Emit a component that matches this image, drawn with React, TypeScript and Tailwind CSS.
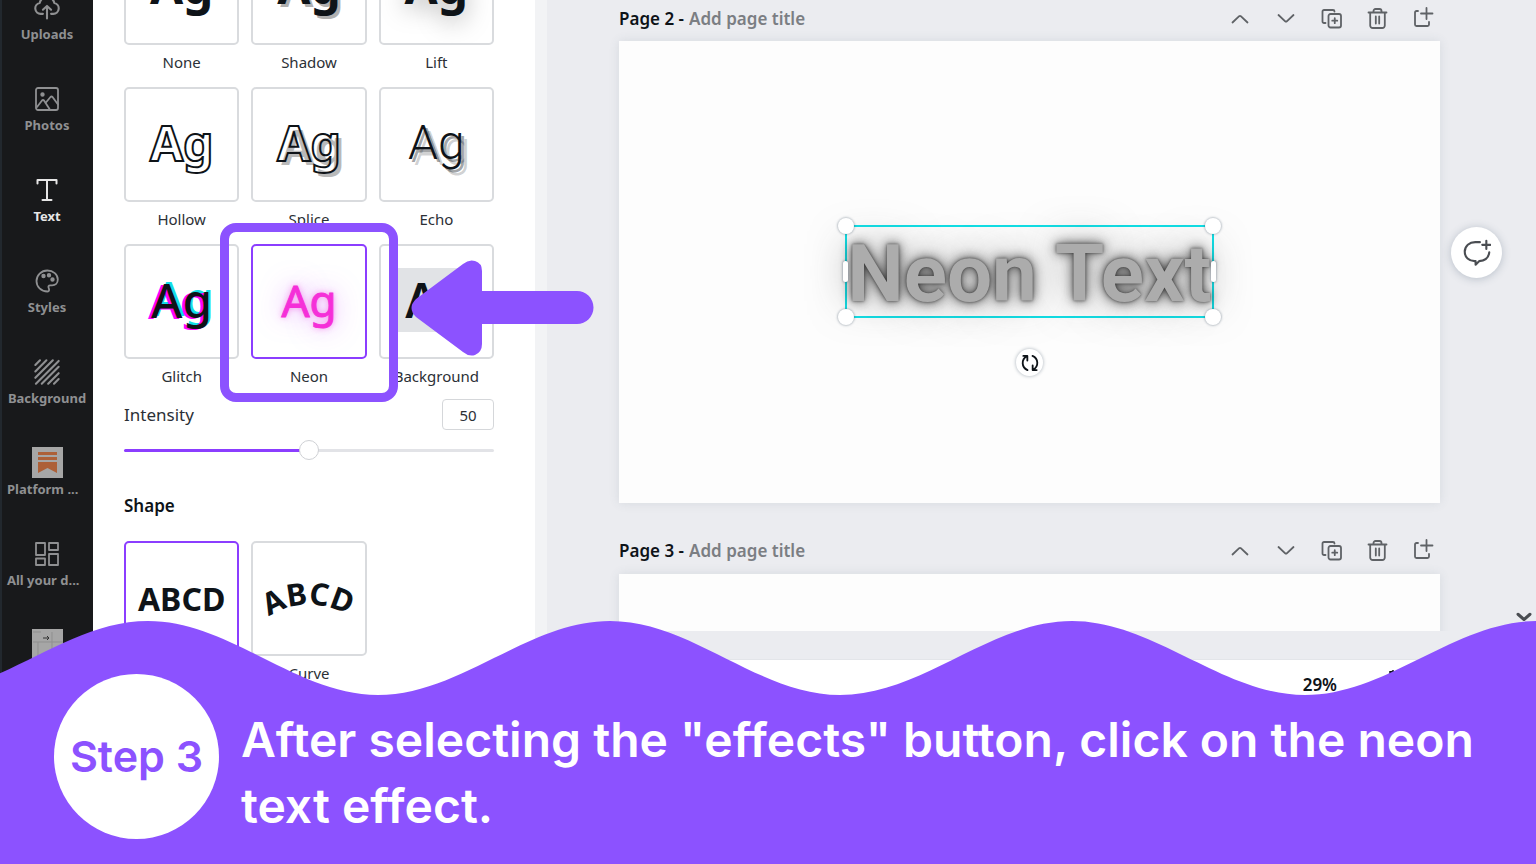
import { useState } from "react";
import type { ReactNode } from "react";

type IconProps = { className?: string; children: ReactNode };

function Icon({ className = "size-6", children }: IconProps) {
  return (
    <svg
      viewBox="0 0 24 24"
      fill="none"
      stroke="currentColor"
      strokeWidth={1.8}
      strokeLinecap="round"
      strokeLinejoin="round"
      className={className}
      aria-hidden="true"
    >
      {children}
    </svg>
  );
}

const NAV: { label: string; icon: ReactNode; active?: boolean; cut?: boolean }[] = [
  {
    label: "Uploads",
    icon: (
      <Icon className="size-7">
        <path d="M8.5 17H6.6a4.7 4.7 0 0 1-.9-9.3 6.5 6.5 0 0 1 12.6 0 4.7 4.7 0 0 1-.9 9.3h-1.9" />
        <path d="M12 21v-10.500M8.500 13.500 12 10.200l3.500 3.300" />
      </Icon>
    ),
  },
  {
    label: "Photos",
    icon: (
      <Icon>
        <rect x="1" y="1" width="22" height="22" rx="2" />
        <circle cx="7.500" cy="7.500" r="1.300" fill="currentColor" />
        <path d="m2 20 5-6.500q1-1 2 0L14.500 22M10.500 16l5-6q1-1 2 0L23 17.500" />
      </Icon>
    ),
  },
  {
    label: "Text",
    active: true,
    icon: (
      <Icon>
        <path d="M2.500 5.500V2h19v3.500M12 2v20M7.500 22h9" strokeWidth={2} />
      </Icon>
    ),
  },
  {
    label: "Styles",
    icon: (
      <Icon>
        <path d="M12.500 22.500C6 22.500 1.500 17.700 1.500 12S6.300 1.500 12.300 1.500 22.800 5.500 22.800 10.500c0 3.600-2.500 5.800-5.700 5.800h-1.900c-1.700 0-2.200 1.500-1.500 2.800.8 1.600.5 3.400-1.200 3.400Z" />
        <circle cx="8.500" cy="7" r="1.300" fill="currentColor" />
        <circle cx="14" cy="6.300" r="1.300" fill="currentColor" />
        <circle cx="17.500" cy="10.500" r="1.300" fill="currentColor" />
      </Icon>
    ),
  },
  {
    label: "Background",
    icon: (
      <Icon className="size-7">
        <path d="m2 6 4-4M2 11.500 11.500 2M2 17 17 2M2.500 22 22 2.500M7.500 22 22 7.500M13 22l9-9M18 22l4-4" />
      </Icon>
    ),
  },
  {
    label: "Platform ...",
    cut: true,
    icon: (
      <svg viewBox="0 0 31 31" className="size-[31px]" aria-hidden="true">
        <path d="M0 0h31v31H0z" fill="#a6a6a6" />
        <path d="M6 5h19v3H6zM6 10h19v3H6zM6 15h19v11l-9.500-5L6 26z" fill="#ad6038" />
      </svg>
    ),
  },
  {
    label: "All your d...",
    cut: true,
    icon: (
      <Icon>
        <path d="M1 1h9v12H1zM14 1h9v7h-9zM1 16.500h9V23H1zM14 12h9v11h-9z" />
      </Icon>
    ),
  },
  {
    label: "Flow",
    icon: (
      <svg viewBox="0 0 31 31" className="size-[31px]" aria-hidden="true">
        <path d="M0 0h31v31H0z" fill="#a6a6a6" />
        <path d="M1 13h30M1 3h8M20 3v28M6 13v18" stroke="#8f8f8f" />
        <path d="M11 9h6m-2-2 2 2-2 2" stroke="#333" fill="none" />
      </svg>
    ),
  },
];

const EFFECTS = [
  { name: "None", style: "text-[48px] font-bold" },
  { name: "Shadow", style: "text-[48px] font-bold [text-shadow:3px_3px_0_#b0b0b0]" },
  {
    name: "Lift",
    style: "text-[48px] font-bold [text-shadow:0_5px_26px_rgba(0,0,0,0.35)]",
  },
  {
    name: "Hollow",
    style: "text-[48px] font-bold text-white [-webkit-text-stroke:2px_#0e1318]",
  },
  {
    name: "Splice",
    style:
      "text-[48px] font-bold text-transparent [-webkit-text-stroke:2px_#0e1318] [text-shadow:4px_4px_0_#b9b9b9]",
  },
  {
    name: "Echo",
    style:
      "text-[48px] font-['Roboto',sans-serif] font-light [text-shadow:3px_3px_0_rgba(14,19,24,0.4),6px_6px_0_rgba(14,19,24,0.2)]",
  },
  {
    name: "Glitch",
    style: "text-[48px] font-medium [text-shadow:-3px_1px_0_#ff00ff,2px_-2px_0_#12dfe6]",
  },
  {
    name: "Neon",
    style:
      "text-[44px] font-normal text-[#f52fd8] [-webkit-text-stroke:1px_#f52fd8] [text-shadow:0_0_6px_rgba(245,60,220,0.6),0_0_26px_rgba(190,60,255,0.55)]",
  },
  { name: "Background", style: "text-[48px] font-semibold bg-[#e1e3e6] px-3 py-2" },
];

export default function App() {
  const [effect, setEffect] = useState("Neon");
  const [intensity, setIntensity] = useState(50);

  return (
    <div className="relative flex h-screen overflow-hidden bg-[#ebecf0] font-['Noto_Sans','Open_Sans',sans-serif] text-[#0e1318]">
      <Sidebar />

      <section className="relative z-10 w-[442px] shrink-0 bg-white pl-[31px] pr-[41px]">
        <div className="-mt-[70px] grid grid-cols-3 gap-x-3 gap-y-[13px]">
          {EFFECTS.map((e) => (
            <div key={e.name} className={e.name === "Neon" ? "relative z-10" : ""}>
              <Tile label={e.name} selected={effect === e.name} onClick={() => setEffect(e.name)}>
                <span className={`leading-[48px] ${e.style}`}>Ag</span>
              </Tile>
              {e.name === "Neon" && <Callout />}
            </div>
          ))}
        </div>

        <div className="mt-[11px] flex items-center justify-between">
          <label htmlFor="intensity" className="text-[17px] leading-6 text-[#2b3036]">
            Intensity
          </label>
          <input
            aria-label="Intensity value"
            value={intensity}
            onChange={(e) => setIntensity(Number(e.target.value) || 0)}
            className="h-[31px] w-[52px] rounded border border-[#d5d7da] text-center text-[15px] text-[#2b3036] outline-none"
          />
        </div>
        <input
          id="intensity"
          type="range"
          min={0}
          max={100}
          value={intensity}
          onChange={(e) => setIntensity(Number(e.target.value))}
          className="mt-[10px] block h-5 w-full appearance-none bg-transparent [&::-webkit-slider-runnable-track]:h-[3px] [&::-webkit-slider-runnable-track]:rounded-full [&::-webkit-slider-runnable-track]:bg-[linear-gradient(to_right,#8b3dff_50%,#e2e3e7_50%)] [&::-webkit-slider-thumb]:-mt-[9px] [&::-webkit-slider-thumb]:size-5 [&::-webkit-slider-thumb]:appearance-none [&::-webkit-slider-thumb]:rounded-full [&::-webkit-slider-thumb]:border [&::-webkit-slider-thumb]:border-[#cfd1d5] [&::-webkit-slider-thumb]:bg-white"
        />

        <h2 className="mt-[34px] text-[17px] font-semibold leading-6">Shape</h2>
        <div className="mt-[23px] grid grid-cols-3 gap-x-3">
          <Tile label="None" selected>
            <span className="pt-1 text-[32px] font-bold leading-10">ABCD</span>
          </Tile>
          <Tile label="Curve">
            <svg viewBox="0 0 112 112" className="size-28" aria-label="ABCD">
              <path id="arc" d="M16 76Q56 50 106 79" fill="none" />
              <text className="fill-[#0e1318] text-[31px] font-bold">
                <textPath href="#arc">ABCD</textPath>
              </text>
            </svg>
          </Tile>
        </div>
      </section>
      <div className="w-3 shrink-0 bg-[#f2f3f5]" />

      <main className="relative flex min-w-0 flex-1 flex-col">
        <div className="min-h-0 flex-1 overflow-hidden pl-[72px] pr-24">
          <PageHeader number={2} />
          <div className="flex aspect-video items-center justify-center bg-[#fdfdfd] shadow-[0_0_10px_rgba(64,87,109,0.12)]">
            <NeonText />
          </div>
          <div className="mt-[30px]">
            <PageHeader number={3} />
          </div>
          <div className="aspect-video bg-[#fdfdfd] shadow-[0_0_10px_rgba(64,87,109,0.12)]" />
        </div>
        <footer className="mt-7 flex h-[205px] items-start justify-end gap-12 border-t border-[#e3e5e9] bg-white pr-[127px] pt-[13px]">
          <span className="text-[17px] font-semibold leading-6">29%</span>
          <Icon className="-mt-1 size-6">
            <path d="M2 8 8 2M5 3h6" strokeWidth={2} />
          </Icon>
        </footer>
        <button
          aria-label="Add comment"
          className="absolute right-[34px] top-[227px] flex size-[51px] items-center justify-center rounded-full bg-white text-[#4a4d52] shadow-[0_1px_8px_rgba(64,87,109,0.3)]"
        >
          <Icon className="size-7">
            <path d="M14.500 2.700H10.500C5.500 2.700 1.500 6 1.500 11c0 4.600 3.600 8 8.500 8h.8v3l3-3c5-.3 8.200-3.300 8.700-7.500M20 1.500v7M16.500 5h7" />
          </Icon>
        </button>
        <Icon className="absolute right-[3px] top-[609px] size-[18px] text-[#4a4d52]">
          <path d="m4 7 8 7 8-7" strokeWidth={4} />
        </Icon>
      </main>

      <StepBanner />
    </div>
  );
}

function Sidebar() {
  return (
    <nav className="w-[93px] shrink-0 border-l-2 border-[#22282e] bg-[#18191b] pr-px">
      <ul className="-mt-7">
        {NAV.map((item) => (
          <li key={item.label}>
            <a
              href="#"
              className={`flex h-[91px] flex-col items-center justify-center text-[13px] font-bold leading-5 ${
                item.active ? "text-[#e6e6e6]" : "text-[#8f9092]"
              }`}
            >
              <span className="flex h-8 items-center">{item.icon}</span>
              <span className={`w-20 whitespace-nowrap ${item.cut ? "text-left" : "text-center"}`}>
                {item.label}
              </span>
            </a>
          </li>
        ))}
      </ul>
    </nav>
  );
}

function Tile({
  label,
  selected = false,
  onClick,
  children,
}: {
  label: string;
  selected?: boolean;
  onClick?: () => void;
  children: ReactNode;
}) {
  return (
    <button onClick={onClick} className="block w-full text-center">
      <span
        className={`flex h-[115px] items-center justify-center overflow-hidden rounded-[5px] border-2 pb-1 ${
          selected ? "border-[#8b3dff]" : "border-[#d9dbde]"
        }`}
      >
        {children}
      </span>
      <span className="mt-[5px] block text-[15px] leading-6 text-[#2b3036]">{label}</span>
    </button>
  );
}

// Ring and arrow that point out the chosen effect
function Callout() {
  return (
    <div className="pointer-events-none">
      <div className="absolute -inset-x-[31px] -bottom-[14px] -top-[21px] rounded-2xl border-[9px] border-[#8c52ff]" />
      <svg
        viewBox="0 0 183 96"
        className="absolute left-[160px] top-4 h-24 w-[183px] fill-[#8c52ff]"
        aria-hidden="true"
      >
        <path d="M5 39 52 4Q58-1 64 1q7 2 7 10v20h95a16.500 16.500 0 0 1 0 33H71v20q0 8-7 11-6 2-12-3L5 57q-9-9 0-18Z" />
      </svg>
    </div>
  );
}

function PageHeader({ number }: { number: number }) {
  return (
    <div className="flex h-[41px] items-center justify-between pb-1 pr-1">
      <label className="flex items-center gap-[5px] text-[17px] font-semibold leading-6">
        Page {number} -
        <input
          placeholder="Add page title"
          className="w-40 bg-transparent font-semibold outline-none placeholder:text-[#7b7e83]"
        />
      </label>
      <div className="flex gap-[22px] text-[#5f6266]">
        <button aria-label="Move up">
          <Icon>
            <path d="m4.500 15.500 6.700-6.300q.8-.7 1.600 0l6.700 6.300" />
          </Icon>
        </button>
        <button aria-label="Move down">
          <Icon>
            <path d="m4.500 8 6.700 6.300q.8.7 1.600 0L19.500 8" />
          </Icon>
        </button>
        <button aria-label="Duplicate page">
          <Icon>
            <path d="M5.500 16H4a1.500 1.500 0 0 1-1.500-1.500v-10A1.500 1.500 0 0 1 4 3H13q1.500 0 1.500 1.500" />
            <rect x="8.500" y="7" width="12.500" height="13.500" rx="2" />
            <path d="M14.750 11.200v5M12.250 13.700h5" />
          </Icon>
        </button>
        <button aria-label="Delete page">
          <Icon>
            <path d="M2.500 5.500h18M7.500 5.500V4a2 2 0 0 1 2-2h4a2 2 0 0 1 2 2v1.500M4.200 5.500V18.500a2.500 2.500 0 0 0 2.500 2.500h9.600a2.500 2.500 0 0 0 2.500-2.500V5.500M9.800 9.500v7M13.200 9.500v7" />
          </Icon>
        </button>
        <button aria-label="Add page">
          <Icon>
            <path d="M6 4H4.500A1.500 1.500 0 0 0 3 5.500v12A1.500 1.500 0 0 0 4.500 19h11a1.500 1.500 0 0 0 1.500-1.500V15M14.500 1v11M9 6.500h11.500" />
          </Icon>
        </button>
      </div>
    </div>
  );
}

function NeonText() {
  const corner = "absolute size-4 rounded-full bg-white shadow-[0_0_2px_1px_rgba(57,76,96,0.3)]";
  const side = "absolute top-[34px] h-[21px] w-[5px] rounded-full bg-white shadow-[0_0_2px_1px_rgba(57,76,96,0.3)]";
  return (
    <div className="relative flex h-[93px] w-[369px] items-center justify-center border-2 border-[#12dfe6] pt-1">
      <p className="whitespace-nowrap font-['Roboto',sans-serif] text-[80px] font-bold leading-[90px] text-[#acacac] [text-shadow:0_0_3px_rgba(30,30,30,0.7),0_0_12px_rgba(20,20,20,0.8),0_0_40px_rgba(60,60,60,0.5)]">
        Neon Text
      </p>
      <span className={`${corner} -left-[9px] -top-[9px]`} />
      <span className={`${corner} -right-[9px] -top-[9px]`} />
      <span className={`${corner} -bottom-[9px] -left-[9px]`} />
      <span className={`${corner} -bottom-[9px] -right-[9px]`} />
      <span className={`${side} -left-1`} />
      <span className={`${side} -right-1`} />
      <button
        aria-label="Rotate"
        className="absolute -bottom-[60px] left-[169px] flex size-[27px] items-center justify-center rounded-full bg-white shadow-[0_0_3px_1px_rgba(57,76,96,0.25)]"
      >
        <Icon className="size-5">
          <path d="M9 20.500C1.500 17 1.500 8 8 4M4 3.500h4.800V9M15 3.500c7.500 3.500 7.500 12.500 1 16.500M20 20.500h-4.800V15" strokeWidth={2.2} />
        </Icon>
      </button>
    </div>
  );
}

function StepBanner() {
  return (
    <div className="absolute inset-x-0 bottom-0 z-20 flex h-[243px] items-start gap-[22px] pl-[54px] pr-8 pt-[53px] font-['Inter',sans-serif] font-semibold">
      <svg
        viewBox="0 0 1536 243"
        preserveAspectRatio="none"
        className="absolute inset-0 h-full w-full fill-[#8c52ff]"
        aria-hidden="true"
      >
        <path d="M-84 74C-2 74 66 0 148 0s148 74 230 74S528 0 610 0s148 74 230 74 150-74 232-74 151 74 233 74S1455 0 1537 0v243H-84z" />
      </svg>
      <div className="relative flex size-[165px] shrink-0 items-center justify-center rounded-full bg-white text-[43px] text-[#8c52ff]">
        Step 3
      </div>
      <p className="relative pt-[33px] text-[48px] leading-[66px] text-white">
        After selecting the "effects" button, click on the neon text effect.
      </p>
    </div>
  );
}
